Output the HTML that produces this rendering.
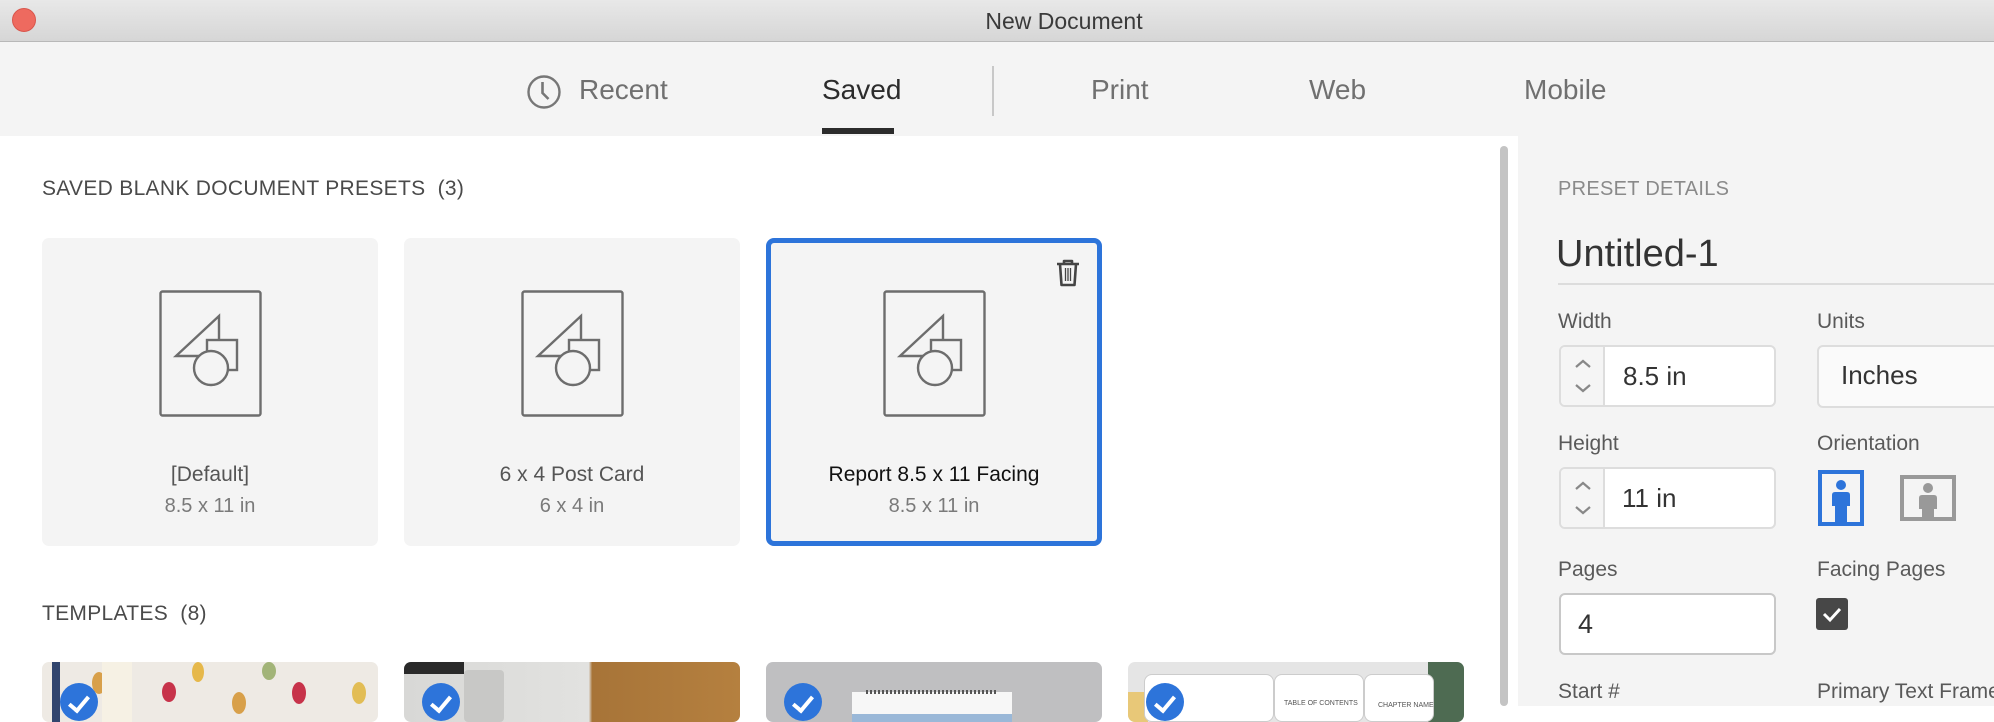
<!DOCTYPE html>
<html><head><meta charset="utf-8"><style>
*{margin:0;padding:0;box-sizing:border-box}
body{width:1994px;height:706px;overflow:hidden;background:#fff;font-family:"Liberation Sans",sans-serif;position:relative}
.a{position:absolute}
.title{left:0;top:0;width:1994px;height:42px;background:linear-gradient(#e8e8e8,#d6d6d6);border-bottom:1px solid #b8b8b8}
.tabs{left:0;top:42px;width:1994px;height:94px;background:#f4f4f4}
.tab{top:72px;font-size:28px;color:#707070;line-height:36px}
.card{top:238px;width:336px;height:308px;background:#f4f4f4;border-radius:7px}
.doc{left:117px;top:52px}
.nm{width:100%;text-align:center;top:225px;font-size:21px;color:#555}
.sub{width:100%;text-align:center;top:257px;font-size:20px;color:#7a7a7a}
.lbl{font-size:21px;color:#595959}
.inp{border:2px solid #ddd;border-radius:6px;background:#fff}
.thumb{top:662px;width:336px;height:60px;border-radius:7px;overflow:hidden}
.chk{width:38px;height:38px;border-radius:50%;background:#2d74da;top:21px;left:18px}
.chk:after{content:"";position:absolute;left:13px;top:9px;width:8px;height:16px;border-right:4px solid #fff;border-bottom:4px solid #fff;transform:rotate(40deg)}
</style></head><body>
<div class="a title"></div>
<div class="a" style="left:12px;top:8px;width:24px;height:24px;border-radius:50%;background:#ee6a5f;border:1px solid #d9564c"></div>
<div class="a" style="left:0;width:1994px;top:8px;text-align:center;font-size:23px;color:#3a3a3a;padding-left:134px">New Document</div>
<div class="a tabs"></div>
<svg class="a" style="left:526px;top:74px" width="36" height="36" viewBox="0 0 36 36"><circle cx="18" cy="18" r="15.5" fill="none" stroke="#777" stroke-width="2.4"/><path d="M16.5 8v11l6 6" fill="none" stroke="#777" stroke-width="2.6"/></svg>
<div class="a tab" style="left:579px">Recent</div>
<div class="a tab" style="left:822px;color:#2c2c2c">Saved</div>
<div class="a" style="left:822px;top:128px;width:72px;height:6px;background:#2c2c2c"></div>
<div class="a" style="left:992px;top:66px;width:2px;height:50px;background:#c8c8c8"></div>
<div class="a tab" style="left:1091px">Print</div>
<div class="a tab" style="left:1309px">Web</div>
<div class="a tab" style="left:1524px">Mobile</div>

<div class="a" style="left:42px;top:177px;font-size:21px;color:#4a4a4a;letter-spacing:0.3px">SAVED BLANK DOCUMENT PRESETS &nbsp;(3)</div>

<div class="a card" style="left:42px">
<svg class="a doc" width="104" height="128" viewBox="0 0 104 128"><rect x="1.5" y="1.5" width="100" height="124" rx="2" fill="none" stroke="#6d6d6d" stroke-width="2.4"/><path d="M60 26 V66 H17 Z" fill="none" stroke="#6d6d6d" stroke-width="2.4"/><rect x="48" y="50" width="30" height="30" fill="#f4f4f4" stroke="#6d6d6d" stroke-width="2.4"/><circle cx="52" cy="78" r="17" fill="#f4f4f4" stroke="#6d6d6d" stroke-width="2.4"/></svg>
<div class="a nm">[Default]</div><div class="a sub">8.5 x 11 in</div></div>

<div class="a card" style="left:404px">
<svg class="a doc" width="104" height="128" viewBox="0 0 104 128"><rect x="1.5" y="1.5" width="100" height="124" rx="2" fill="none" stroke="#6d6d6d" stroke-width="2.4"/><path d="M60 26 V66 H17 Z" fill="none" stroke="#6d6d6d" stroke-width="2.4"/><rect x="48" y="50" width="30" height="30" fill="#f4f4f4" stroke="#6d6d6d" stroke-width="2.4"/><circle cx="52" cy="78" r="17" fill="#f4f4f4" stroke="#6d6d6d" stroke-width="2.4"/></svg>
<div class="a nm">6 x 4 Post Card</div><div class="a sub">6 x 4 in</div></div>

<div class="a card" style="left:766px;width:336px;border:5px solid #2d74da;border-radius:8px">
<svg class="a" style="left:112px;top:47px" width="104" height="128" viewBox="0 0 104 128"><rect x="1.5" y="1.5" width="100" height="124" rx="2" fill="none" stroke="#6d6d6d" stroke-width="2.4"/><path d="M60 26 V66 H17 Z" fill="none" stroke="#6d6d6d" stroke-width="2.4"/><rect x="48" y="50" width="30" height="30" fill="#f4f4f4" stroke="#6d6d6d" stroke-width="2.4"/><circle cx="52" cy="78" r="17" fill="#f4f4f4" stroke="#6d6d6d" stroke-width="2.4"/></svg>
<svg class="a" style="left:283px;top:15px" width="28" height="30" viewBox="0 0 28 30"><path d="M3 6h22M10 6V3h8v3M6 6l1.5 21h13L22 6" fill="none" stroke="#444" stroke-width="2.6" stroke-linejoin="round"/><path d="M11.5 10v13M14 10v13M16.5 10v13" stroke="#444" stroke-width="1.3"/></svg>
<div class="a nm" style="top:220px;color:#111">Report 8.5 x 11 Facing</div><div class="a sub" style="top:252px">8.5 x 11 in</div></div>

<div class="a" style="left:42px;top:602px;font-size:21px;color:#4a4a4a;letter-spacing:0.3px">TEMPLATES &nbsp;(8)</div>

<div class="a thumb" style="left:42px;background:#eeeae4">
<div class="a" style="left:10px;top:0;width:8px;height:60px;background:#31456e"></div>
<div class="a" style="left:50px;top:10px;width:14px;height:22px;border-radius:50%;background:#d8a04a"></div>
<div class="a" style="left:60px;top:0;width:30px;height:60px;background:#f6f1e4"></div>
<div class="a" style="left:120px;top:20px;width:14px;height:20px;border-radius:50%;background:#c7334a"></div>
<div class="a" style="left:150px;top:0;width:12px;height:20px;border-radius:50%;background:#e6b84a"></div>
<div class="a" style="left:190px;top:30px;width:14px;height:22px;border-radius:50%;background:#d8a04a"></div>
<div class="a" style="left:220px;top:0;width:14px;height:18px;border-radius:50%;background:#a2b478"></div>
<div class="a" style="left:250px;top:20px;width:14px;height:22px;border-radius:50%;background:#c7334a"></div>
<div class="a" style="left:310px;top:20px;width:14px;height:22px;border-radius:50%;background:#e2bd55"></div>
<div class="a chk"></div></div>
<div class="a thumb" style="left:404px;background:linear-gradient(90deg,#d8d8d6 0,#e2e2e0 55%,#a77438 56%,#b5803f 100%)">
<div class="a" style="left:0;top:0;width:60px;height:12px;background:#2a2a2a"></div>
<div class="a" style="left:60px;top:8px;width:40px;height:52px;background:#c8c8c6;border-radius:4px"></div>
<div class="a chk"></div></div>
<div class="a thumb" style="left:766px;background:#bfbfc1">
<div class="a" style="left:86px;top:30px;width:160px;height:30px;background:#f7f7f7"></div>
<div class="a" style="left:100px;top:28px;width:130px;height:4px;background:repeating-linear-gradient(90deg,#555 0 2px,transparent 2px 4px)"></div>
<div class="a" style="left:86px;top:52px;width:160px;height:8px;background:#9ab8d8"></div>
<div class="a chk"></div></div>
<div class="a thumb" style="left:1128px;background:#e5e5e5">
<div class="a" style="left:300px;top:0;width:36px;height:60px;background:#4e6b52"></div>
<div class="a" style="left:0;top:30px;width:20px;height:30px;background:#e8c878"></div>
<div class="a" style="left:16px;top:12px;width:130px;height:48px;background:#fff;border-radius:8px;border:1px solid #ccc"></div>
<div class="a" style="left:146px;top:12px;width:90px;height:48px;background:#fff;border-radius:8px;border:1px solid #ccc"></div>
<div class="a" style="left:236px;top:12px;width:70px;height:48px;background:#fff;border-radius:8px;border:1px solid #ccc"></div>
<div class="a" style="left:156px;top:38px;font-size:7px;color:#555">TABLE OF CONTENTS</div>
<div class="a" style="left:250px;top:40px;font-size:7px;color:#555">CHAPTER NAME</div>
<div class="a chk"></div></div>

<div class="a" style="left:1500px;top:146px;width:8px;height:560px;border-radius:4px;background:#c4c4c4"></div>
<div class="a" style="left:1518px;top:136px;width:476px;height:570px;background:#f4f4f4"></div>

<div class="a" style="left:1558px;top:178px;font-size:20px;color:#8a8a8a;letter-spacing:0.3px">PRESET DETAILS</div>
<div class="a" style="left:1556px;top:233px;font-size:38px;color:#333">Untitled-1</div>
<div class="a" style="left:1558px;top:283px;width:436px;height:2px;background:#dcdcdc"></div>

<div class="a lbl" style="left:1558px;top:310px">Width</div>
<div class="a lbl" style="left:1817px;top:310px">Units</div>
<div class="a inp" style="left:1559px;top:345px;width:217px;height:62px"></div>
<div class="a" style="left:1561px;top:347px;width:44px;height:58px;background:#f5f5f5;border-right:2px solid #ddd;border-radius:4px 0 0 4px"></div>
<svg class="a" style="left:1572px;top:356px" width="22" height="40" viewBox="0 0 22 40"><path d="M4 11l7-6 7 6M4 29l7 6 7-6" fill="none" stroke="#888" stroke-width="2.2"/></svg>
<div class="a" style="left:1623px;top:361px;font-size:26px;color:#333">8.5 in</div>
<div class="a inp" style="left:1817px;top:345px;width:200px;height:63px;background:#fafafa"></div>
<div class="a" style="left:1841px;top:360px;font-size:26px;color:#333">Inches</div>

<div class="a lbl" style="left:1558px;top:432px">Height</div>
<div class="a lbl" style="left:1817px;top:432px">Orientation</div>
<div class="a inp" style="left:1559px;top:467px;width:217px;height:62px"></div>
<div class="a" style="left:1561px;top:469px;width:44px;height:58px;background:#f5f5f5;border-right:2px solid #ddd;border-radius:4px 0 0 4px"></div>
<svg class="a" style="left:1572px;top:478px" width="22" height="40" viewBox="0 0 22 40"><path d="M4 11l7-6 7 6M4 29l7 6 7-6" fill="none" stroke="#888" stroke-width="2.2"/></svg>
<div class="a" style="left:1622px;top:483px;font-size:26px;color:#333">11 in</div>
<svg class="a" style="left:1818px;top:470px" width="46" height="56" viewBox="0 0 46 56"><rect x="2" y="2" width="42" height="52" fill="none" stroke="#2d74da" stroke-width="4"/><circle cx="23" cy="15" r="5" fill="#2d74da"/><path d="M14 25q0-3 3-3h12q3 0 3 3v11h-3v16h-12v-16h-3z" fill="#2d74da"/></svg>
<svg class="a" style="left:1900px;top:475px" width="56" height="46" viewBox="0 0 56 46"><rect x="2" y="2" width="52" height="42" fill="none" stroke="#999" stroke-width="4"/><circle cx="28" cy="13" r="5" fill="#999"/><path d="M19 23q0-3 3-3h12q3 0 3 3v11h-3v10h-12v-10h-3z" fill="#999"/></svg>

<div class="a lbl" style="left:1558px;top:558px">Pages</div>
<div class="a lbl" style="left:1817px;top:558px">Facing Pages</div>
<div class="a inp" style="left:1559px;top:593px;width:217px;height:62px;border-color:#c8c8c8"></div>
<div class="a" style="left:1578px;top:609px;font-size:27px;color:#333">4</div>
<div class="a" style="left:1816px;top:598px;width:32px;height:32px;background:#474747;border-radius:3px"></div>
<svg class="a" style="left:1819px;top:602px" width="26" height="24" viewBox="0 0 26 24"><path d="M5 12l6 6 10-11" fill="none" stroke="#fff" stroke-width="3"/></svg>

<div class="a lbl" style="left:1558px;top:680px">Start #</div>
<div class="a lbl" style="left:1817px;top:680px;white-space:nowrap">Primary Text Frame</div>
</body></html>
